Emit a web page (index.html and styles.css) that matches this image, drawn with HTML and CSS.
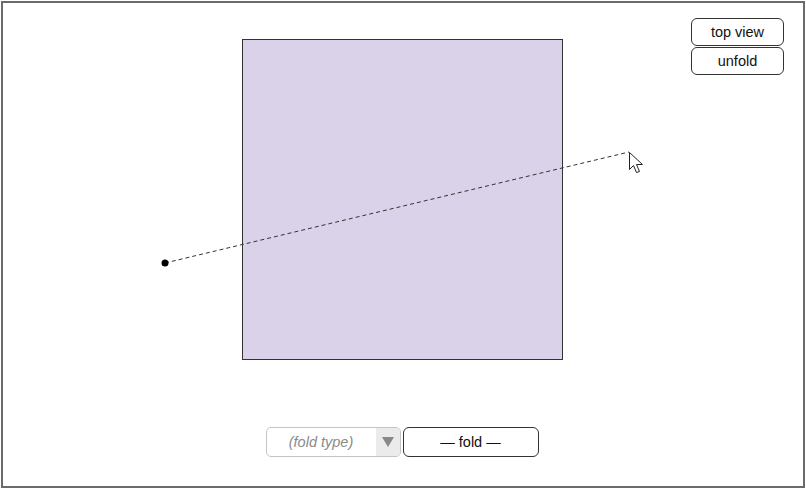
FILE: index.html
```html
<!DOCTYPE html>
<html>
<head>
<meta charset="utf-8">
<link rel="stylesheet" href="styles.css">
</head>
<body>
<div class="frame">
  <svg class="canvas" width="802" height="485" viewBox="0 0 802 485">
    <rect x="239.5" y="36.5" width="320" height="320" fill="#d9d2e9" stroke="#333" stroke-width="1"/>
    <line x1="162" y1="260" x2="626" y2="149" stroke="#333" stroke-width="1" stroke-dasharray="4 3"/>
    <circle cx="162" cy="260" r="3.5" fill="#000"/>
    <path d="M626.5 149.5 L626.5 166.5 L630.5 162.5 L633.5 169.5 L636.5 168.5 L633.5 161.5 L639.5 161.5 Z" fill="#fff" stroke="#222" stroke-width="1" stroke-linejoin="miter"/>
  </svg>
  <div class="top-controls">
    <button class="btn">top view</button>
    <button class="btn">unfold</button>
  </div>
  <div class="bottom-controls">
    <div class="select">
      <span class="select-label">(fold type)</span>
      <span class="select-arrow"><svg width="12" height="10" viewBox="0 0 12 10"><path d="M0 0 L12 0 L6 10 Z" fill="#888"/></svg></span>
    </div>
    <button class="btn wide">— fold —</button>
  </div>
</div>
</body>
</html>
```

FILE: styles.css
```css
html, body {
  margin: 0;
  padding: 0;
  background: #fff;
}
body {
  padding: 1px 0 0 1px;
  font-family: "Liberation Sans", Arial, sans-serif;
}
.frame {
  position: relative;
  box-sizing: border-box;
  width: 804px;
  height: 487px;
  border: 2px solid #6b6b6b;
  display: flex;
  flex-direction: column;
}
.canvas {
  position: absolute;
  left: 0;
  top: 0;
}
.top-controls {
  position: relative;
  display: flex;
  flex-direction: column;
  align-items: flex-end;
  gap: 1px;
  padding: 15px 19px 0 0;
}
.btn {
  box-sizing: border-box;
  margin: 0;
  width: 93px;
  height: 28px;
  border: 1px solid #333;
  border-radius: 6px;
  background: #fff;
  font-family: "Liberation Sans", Arial, sans-serif;
  font-size: 14.5px;
  color: #111;
  padding: 0;
}
.btn.wide {
  width: 136px;
  height: 30px;
}
.bottom-controls {
  position: relative;
  margin-top: auto;
  display: flex;
  justify-content: center;
  gap: 2px;
  padding: 0 2px 29px 0;
}
.select {
  box-sizing: border-box;
  width: 135px;
  height: 30px;
  border: 1px solid #c4c4c4;
  border-radius: 5px;
  display: flex;
  overflow: hidden;
}
.select-label {
  flex: 1;
  display: flex;
  align-items: center;
  justify-content: center;
  font-size: 14.5px;
  font-style: italic;
  color: #8a8a8a;
}
.select-arrow {
  width: 24px;
  background: #ebebeb;
  display: flex;
  align-items: center;
  justify-content: center;
}
```
